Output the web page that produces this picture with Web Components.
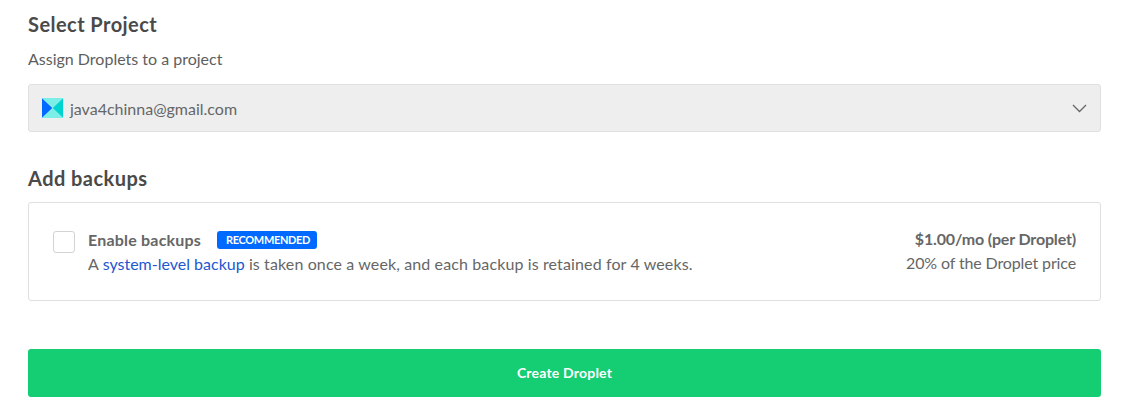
<!DOCTYPE html>
<html><head><meta charset="utf-8">
<style>
html,body{margin:0;background:#fff;height:415px;overflow:hidden}
body{font-family:Lato,"Liberation Sans",sans-serif;color:#5b5b5b;-webkit-font-smoothing:antialiased}
</style></head><body>
<template id="t-page"><style>
:host{display:flex;flex-direction:column;padding:12px 34px 0 28px;width:1073px}
</style><slot></slot></template>

<template id="t-heading"><style>
:host{display:block;font-size:20px;line-height:24px;font-weight:700;color:#4a4a4a;letter-spacing:.45px}
</style><slot></slot></template>

<template id="t-select"><style>
:host{display:flex;align-items:center;height:46px;margin-top:14px;background:#eee;border:1px solid #e0e0e0;border-radius:3px;padding:0 13px;font-size:16px;color:#666}
.logo{width:21px;height:20px;margin-right:7px;flex:none;display:block}
.text{flex:1;letter-spacing:0}
.chev{width:15px;height:9px;display:block;flex:none}
</style>
<svg class="logo" viewBox="0 0 21 20"><path fill="#0069ff" d="M0 0l10.500 10L0 20z"/><path fill="#00d4d0" d="M21 0L10.500 10 21 20z"/><path fill="#7ceee8" d="M0 0h21L10.500 10zM0 20h21L10.500 10z"/></svg>
<span class="text"><slot></slot></span>
<svg class="chev" viewBox="0 0 15 9"><path d="M1 1l6.500 6.500L14 1" fill="none" stroke="#666" stroke-width="1.300"/></svg>
</template>

<template id="t-option"><style>
:host{display:flex;justify-content:space-between;height:97px;margin-top:12px;border:1px solid #dfdfdf;border-radius:3px;box-sizing:content-box;padding:0 24px;font-size:16px;line-height:24px;color:#666}
.left{display:flex;gap:13px;padding-top:25px}
.box{width:20px;height:20px;border:1px solid #d3d3d3;border-radius:3px;background:#fff;margin-top:3px;flex:none}
.right{padding-top:24px;text-align:right}
.price{letter-spacing:-.16px}
.note{letter-spacing:-.13px}
.title{display:flex;align-items:center;gap:16px;height:24px}
.title b{letter-spacing:.2px}
b{font-weight:700}
.desc{letter-spacing:.12px}
</style>
<div class="left"><div class="box"></div><div>
<div class="title"><b><slot name="title"></slot></b><slot name="badge"></slot></div>
<div class="desc"><slot name="desc"></slot></div></div></div>
<div class="right"><div class="price"><b><slot name="price"></slot></b></div><div class="note"><slot name="note"></slot></div></div>
</template>

<template id="t-link"><style>
:host{display:inline;color:#2257d0;letter-spacing:0;cursor:pointer}
</style><slot></slot></template>

<template id="t-badge"><style>
:host{display:inline-block;background:#0069ff;color:#fff;font-size:11px;font-weight:700;line-height:18px;height:18px;padding:0 7px 0 9px;border-radius:3px;letter-spacing:-.36px}
</style><slot></slot></template>

<template id="t-button"><style>
:host{display:flex;align-items:center;justify-content:center;box-sizing:border-box;height:48px;padding-bottom:1px;margin-top:48px;background:#15cd72;color:#fff;border-radius:3px;font-size:14px;font-weight:700;letter-spacing:.2px}
</style><slot></slot></template>

<template id="t-sub"><style>
:host{display:block;font-size:16px;line-height:22px;margin-top:12px;color:#5e5e5e;letter-spacing:0}
</style><slot></slot></template>

<x-page>
<x-heading>Select Project</x-heading>
<x-sub>Assign Droplets to a project</x-sub>
<x-select>java4chinna@gmail.com</x-select>
<x-heading style="margin-top:34px">Add backups</x-heading>
<x-option>
<span slot="title">Enable backups</span>
<x-badge slot="badge">RECOMMENDED</x-badge>
<span slot="desc">A <x-link>system-level backup</x-link> is taken once a week, and each backup is retained for 4 weeks.</span>
<span slot="price">$1.00/mo (per Droplet)</span>
<span slot="note">20% of the Droplet price</span>
</x-option>
<x-button>Create Droplet</x-button>
</x-page>

<script>
for (const n of ['page','heading','select','option','link','badge','button','sub']) {
  customElements.define('x-'+n, class extends HTMLElement {
    constructor(){super();this.attachShadow({mode:'open'}).appendChild(document.getElementById('t-'+n).content.cloneNode(true));}
  });
}
</script>
</body></html>
